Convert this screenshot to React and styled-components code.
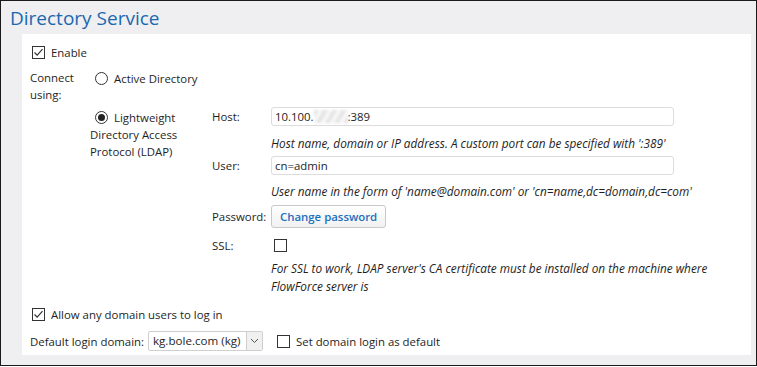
import React from 'react'
import styled, { createGlobalStyle } from 'styled-components'

const GlobalStyle = createGlobalStyle`
  html, body {
    margin: 0;
    padding: 0;
  }
  body {
    font-family: 'Open Sans', 'Noto Sans', sans-serif;
    font-size: 11.4px;
    color: #1e1e1e;
  }
`

const Frame = styled.div`
  box-sizing: border-box;
  width: 757px;
  height: 366px;
  border: 1px solid #1a1a1a;
  background: #efeff2;
  padding: 0 5px 0 21px;
`

const Title = styled.h1`
  margin: 0 0 0 -12px;
  height: 33px;
  font-size: 19px;
  font-weight: 400;
  line-height: 34px;
  color: #1a68ad;
`

const Panel = styled.div`
  background: #fff;
  padding: 8px 8px 4px;
  display: flex;
  flex-direction: column;
`

const Line = styled.label`
  display: flex;
  align-items: center;
  height: 20px;
  margin-top: ${p => p.$top || 0}px;
`

const Box = styled.span`
  box-sizing: border-box;
  width: 13px;
  height: 13px;
  border: 1px solid #333;
  margin: 0 6px 0 ${p => p.$left ?? 2}px;
  display: inline-flex;
  align-items: center;
  justify-content: center;
  flex: none;
`

const Check = ({ checked, left }) => (
  <Box $left={left}>
    {checked && (
      <svg width="11" height="11" viewBox="0 0 11 11">
        <path d="M1.5 5.5 L4.2 8.2 L9.5 2.2" fill="none" stroke="#333" strokeWidth="1.2" />
      </svg>
    )}
  </Box>
)

const RadioRing = styled.span`
  box-sizing: border-box;
  display: inline-block;
  vertical-align: -2px;
  width: 13px;
  height: 13px;
  border: 1px solid #333;
  border-radius: 50%;
  margin: 0 6px 0 5px;
  position: relative;
  &::after {
    content: '';
    display: ${p => (p.$on ? 'block' : 'none')};
    position: absolute;
    left: 2px;
    top: 2px;
    width: 7px;
    height: 7px;
    border-radius: 50%;
    background: #222;
  }
`

const Connect = styled.div`
  display: grid;
  grid-template-columns: 60px 1fr;
  margin-top: 6px;
`

const ConnectLabel = styled.div`
  line-height: 17px;
  padding-top: 0.5px;
`

const Options = styled.div`
  display: flex;
  flex-direction: column;
`

const RadioLine = styled.div`
  height: 20px;
  line-height: 20px;
  margin-top: 1px;
`

const LdapRow = styled.div`
  display: flex;
  margin-top: 18px;
`

const LdapText = styled.div`
  width: 122px;
  line-height: 17px;
  padding-top: 1.5px;
`

const Fields = styled.div`
  display: grid;
  grid-template-columns: 59px 470px;
  align-items: center;
`

const FieldLabel = styled.div`
  grid-column: 1;
`

const TextBox = styled.div`
  grid-column: 2;
  box-sizing: border-box;
  width: 403px;
  height: 19px;
  border: 1px solid #dcdcdc;
  border-radius: 3px;
  padding: 0 3px;
  line-height: 17px;
  display: flex;
  align-items: center;
`

const Blur = styled.span`
  display: inline-block;
  width: 34px;
  height: 13px;
  background: repeating-linear-gradient(
    120deg,
    #e6e6e6 0 4px,
    #f6f6f6 4px 8px
  );
  filter: blur(1px);
`

const Hint = styled.div`
  grid-column: 2;
  font-style: italic;
  font-size: 11.8px;
  line-height: ${p => p.$lh || 17}px;
  margin: ${p => p.$m};
`

const Button = styled.button`
  grid-column: 2;
  justify-self: start;
  box-sizing: border-box;
  height: 23px;
  padding: 0 8px;
  border: 1px solid #c9c9c9;
  border-radius: 3px;
  background: linear-gradient(#ffffff, #f1f1f1);
  color: #1b6fbf;
  font-family: inherit;
  font-size: 11.4px;
  font-weight: 600;
`

const SslCell = styled.div`
  grid-column: 2;
  height: 20px;
  margin-top: 7px;
  display: flex;
  align-items: center;
`

const DomainRow = styled.div`
  display: flex;
  align-items: center;
  height: 20px;
  margin-top: 7px;
`

const Select = styled.div`
  box-sizing: border-box;
  width: 115px;
  height: 20px;
  margin-left: 4px;
  border: 1px solid #cfcfcf;
  border-radius: 2px;
  display: flex;
  align-items: stretch;
  font-size: 11.6px;
`

const SelectValue = styled.span`
  flex: 1;
  padding-left: 4px;
  line-height: 18px;
`

const SelectArrow = styled.span`
  width: 15px;
  border-left: 1px solid #cfcfcf;
  background: #f0f0f0;
  display: flex;
  align-items: center;
  justify-content: center;
`

export default function App() {
  return (
    <>
      <GlobalStyle />
      <Frame>
        <Title>Directory Service</Title>
        <Panel>
          <Line>
            <Check checked />
            Enable
          </Line>
          <Connect>
            <ConnectLabel>
              Connect
              <br />
              using:
            </ConnectLabel>
            <Options>
              <RadioLine>
                <RadioRing />
                Active Directory
              </RadioLine>
              <LdapRow>
                <LdapText>
                  <RadioRing $on />
                  Lightweight Directory Access Protocol (LDAP)
                </LdapText>
                <Fields>
                  <FieldLabel>Host:</FieldLabel>
                  <TextBox>
                    10.100.
                    <Blur />
                    :389
                  </TextBox>
                  <Hint $m="9px 0 4px">
                    Host name, domain or IP address. A custom port can be specified with ':389'
                  </Hint>
                  <FieldLabel>User:</FieldLabel>
                  <TextBox>cn=admin</TextBox>
                  <Hint $m="8px 0 5px">
                    User name in the form of 'name@domain.com' or 'cn=name,dc=domain,dc=com'
                  </Hint>
                  <FieldLabel>Password:</FieldLabel>
                  <Button>Change password</Button>
                  <FieldLabel style={{ marginTop: 7 }}>SSL:</FieldLabel>
                  <SslCell>
                    <Check left={3} />
                  </SslCell>
                  <Hint $lh={18} $m="4px 0 0">
                    For SSL to work, LDAP server's CA certificate must be installed on the machine
                    where FlowForce server is
                  </Hint>
                </Fields>
              </LdapRow>
            </Options>
          </Connect>
          <Line $top={9}>
            <Check checked />
            Allow any domain users to log in
          </Line>
          <DomainRow>
            Default login domain:
            <Select>
              <SelectValue>kg.bole.com (kg)</SelectValue>
              <SelectArrow>
                <svg width="9" height="6" viewBox="0 0 9 6">
                  <path d="M1 1 L4.5 4.5 L8 1" fill="none" stroke="#555" strokeWidth="1" />
                </svg>
              </SelectArrow>
            </Select>
            <Check left={14} />
            Set domain login as default
          </DomainRow>
        </Panel>
      </Frame>
    </>
  )
}
